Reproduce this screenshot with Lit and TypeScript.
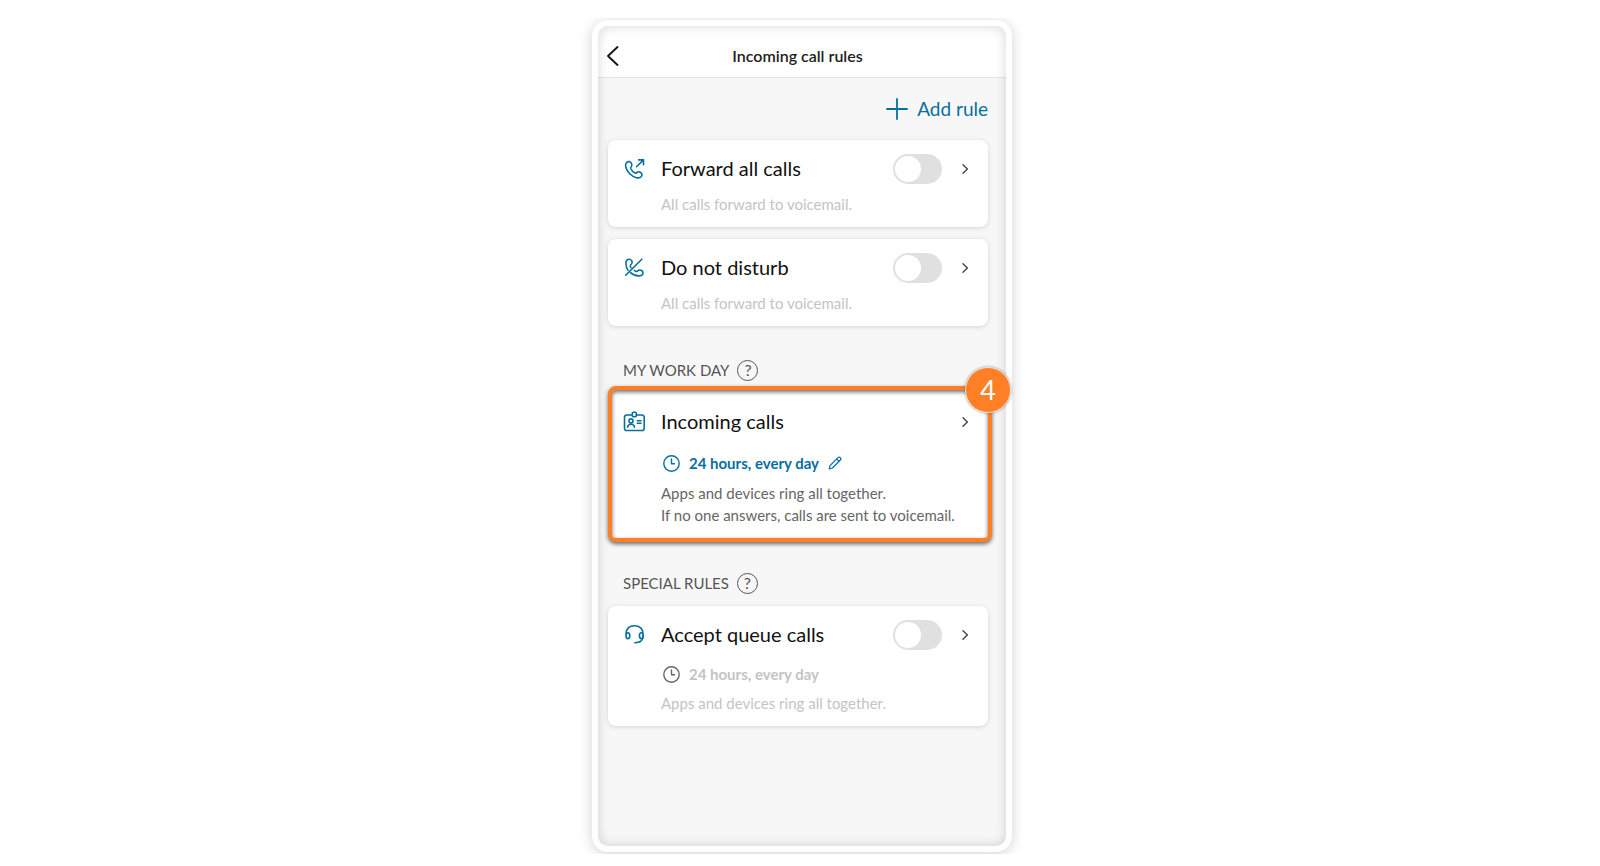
import { LitElement, html, css, svg, nothing } from "lit";
import { customElement, property } from "lit/decorators.js";

const handset = svg`<path d="M5.5 3.6C3 4 2.2 6.5 2.8 9C4 14 8.5 18.5 13.5 19.7C16 20.3 18.7 19.5 19 17C19.2 15 16.5 13.3 14.8 14C13.5 14.6 13.5 15.7 12 15C10 14 8.5 12.3 7.7 10.5C7.2 9.3 8.7 8.8 8.8 7.5C9 5.500 7.500 3.300 5.500 3.600Z"/>`;

const icons: Record<string, unknown> = {
  forward: svg`${handset}<path d="M13.5 8.7L20.5 1.9M15.7 1.9H20.5V6.7"/>`,
  dnd: svg`<path d="M5 13.2C3.6 11 2.9 8.5 2.9 6C2.9 3.5 4.5 2 6.5 2.2C8.7 2.5 9.7 4.7 8.8 6.5C8.2 7.7 7 8 7.3 9.3L7.9 10.6M7.6 15.6C9.5 17.4 12.5 18.8 15.5 18.9C18.2 19 20 18 20 16C20 13.8 17.6 12.5 15.8 13.2C14.5 13.7 14.2 14.9 12.8 14.4L11.2 13.4M2.7 18.2L18.8 2.2"/>`,
  badge: svg`<path d="M9.3 4H3.8A2.3 2.3 0 0 0 1.5 6.3V17.2A2.3 2.3 0 0 0 3.8 19.5H18.9A2.3 2.3 0 0 0 21.2 17.2V6.3A2.3 2.3 0 0 0 18.9 4H13.3"/><rect x="9.3" y="1.2" width="4" height="4.6" rx="1"/><circle cx="8" cy="9.9" r="2"/><path d="M4.6 16.2C4.9 13.6 6.2 13.2 8 13.2S11.2 13.6 11.5 16.2M14.3 9.8H18M14.3 12.3H18"/>`,
  headset: svg`<path d="M3.2 10C2.8 4.8 6.5 1.7 11.5 1.7S20.2 4.8 19.8 10M20.2 12.5C20 16.7 16.5 18.6 11.8 18.7"/><ellipse cx="4.9" cy="11.7" rx="1.9" ry="2.9"/><ellipse cx="18.3" cy="11.7" rx="1.9" ry="2.9"/>`,
};

interface Rule {
  icon: string;
  title: string;
  lines: string[];
  schedule?: string;
  toggle?: boolean;
  step?: string;
}

@customElement("rule-card")
export class RuleCard extends LitElement {
  @property({ attribute: false }) rule!: Rule;

  static styles = css`
    :host {
      display: block;
      font-family: Lato, "Liberation Sans", sans-serif;
    }
    .card {
      position: relative;
      padding: 14px 16px 12px 15px;
      background: #fff;
      border-radius: 8px;
      box-shadow: 0 1px 5px rgba(0, 0, 0, 0.14);
    }
    .card.marked {
      margin-right: -4px;
      padding: 17px 16px 12px 11px;
      border: 4px solid #ff7f27;
      box-shadow: 0 2px 4px rgba(0, 0, 0, 0.6), inset 0 2px 4px rgba(0, 0, 0, 0.6);
    }
    .top {
      display: flex;
      align-items: center;
      gap: 16px;
      height: 30px;
    }
    h3 {
      flex: 1;
      margin: 0;
      padding-bottom: 2px;
      font-size: 20px;
      line-height: 28px;
      font-weight: 400;
      color: #111;
    }
    svg {
      display: block;
      flex: none;
      fill: none;
      stroke: currentColor;
      stroke-linecap: round;
      stroke-linejoin: round;
    }
    .icon {
      width: 22px;
      height: 22px;
      color: #066f9f;
      stroke-width: 1.6;
    }
    .toggle {
      appearance: none;
      flex: none;
      width: 49px;
      height: 30px;
      margin: 0;
      padding: 2px;
      border-radius: 15px;
      background: #e0e0e0;
      cursor: pointer;
    }
    .toggle::before {
      content: "";
      display: block;
      width: 26px;
      height: 26px;
      border-radius: 50%;
      background: #fff;
    }
    .toggle:checked {
      background: #066f9f;
    }
    .toggle:checked::before {
      margin-left: auto;
    }
    button {
      display: flex;
      align-items: center;
      justify-content: center;
      padding: 0;
      border: 0;
      background: none;
      color: inherit;
      font: inherit;
      cursor: pointer;
    }
    .open {
      width: 14px;
      height: 30px;
      color: #444;
    }
    .body {
      margin: 9px 0 0 38px;
      font-size: 15px;
      line-height: 22px;
      color: #666;
    }
    .off .body {
      color: #c4c4c4;
    }
    .schedule {
      display: flex;
      align-items: center;
      gap: 9px;
      margin: 13px 0 7px;
      padding-left: 2px;
      font-weight: 700;
      color: #066f9f;
    }
    .marked .schedule {
      margin: 15px 0 8px;
    }
    .timed .body {
      margin-top: 0;
    }
    .off .schedule {
      color: #c4c4c4;
    }
    .off .clock {
      color: #666;
    }
    p {
      margin: 0;
    }
    .step {
      position: absolute;
      top: -23px;
      right: -23px;
      z-index: 3;
      display: flex;
      align-items: center;
      justify-content: center;
      box-sizing: border-box;
      width: 46px;
      height: 46px;
      border: 1px solid #f3e4da;
      border-radius: 50%;
      background: #ff7f27;
      box-shadow: 0 0 3px rgba(0, 0, 0, 0.4);
      font-size: 27px;
      line-height: 30px;
      color: #fff;
    }
  `;

  render() {
    const r = this.rule;
    const kind = `card ${r.step ? "marked" : ""} ${r.toggle ? "off" : ""} ${r.schedule ? "timed" : ""}`;
    return html`<article class=${kind}>
      <div class="top">
        <svg class="icon" viewBox="0 0 22 22" aria-hidden="true">${icons[r.icon]}</svg>
        <h3 id="title">${r.title}</h3>
        ${r.toggle
          ? html`<input class="toggle" type="checkbox" role="switch" aria-labelledby="title" />`
          : nothing}
        <button class="open" type="button" aria-labelledby="title">
          <svg width="10" height="12" viewBox="0 0 10 12" stroke-width="1.4"><path d="M3 1.8L7.4 6L3 10.2" /></svg>
        </button>
      </div>
      <div class="body">
        ${r.schedule
          ? html`<div class="schedule">
              <svg class="clock" width="17" height="17" viewBox="0 0 17 17" stroke-width="1.4" aria-hidden="true">
                <circle cx="8.5" cy="8.5" r="7.7" />
                <path d="M8.5 4V8.8H11.5" />
              </svg>
              <span>${r.schedule}</span>
              ${r.step
                ? html`<button type="button" aria-label="Edit">
                    <svg width="14" height="14" viewBox="0 0 14 14" stroke-width="1.2">
                      <path d="M1.2 12.8L2 9.6L10 1.6C11.5 .3 13.7 2.5 12.4 4L4.4 12Z M8.7 3L11 5.3" />
                    </svg>
                  </button>`
                : nothing}
            </div>`
          : nothing}
        ${r.lines.map((line) => html`<p>${line}</p>`)}
      </div>
      ${r.step ? html`<span class="step">${r.step}</span>` : nothing}
    </article>`;
  }
}

const general: Rule[] = [
  { icon: "forward", title: "Forward all calls", lines: ["All calls forward to voicemail."], toggle: true },
  { icon: "dnd", title: "Do not disturb", lines: ["All calls forward to voicemail."], toggle: true },
];

const workDay: Rule = {
  icon: "badge",
  title: "Incoming calls",
  schedule: "24 hours, every day",
  lines: ["Apps and devices ring all together.", "If no one answers, calls are sent to voicemail."],
  step: "4",
};

const special: Rule = {
  icon: "headset",
  title: "Accept queue calls",
  schedule: "24 hours, every day",
  lines: ["Apps and devices ring all together."],
  toggle: true,
};

@customElement("app-root")
export class AppRoot extends LitElement {
  static styles = css`
    :host {
      display: block;
      min-height: 100vh;
      box-sizing: border-box;
      padding: 18px 0 12px 4px;
      background: #fff;
      font-family: Lato, "Liberation Sans", sans-serif;
    }
    .stage {
      box-sizing: border-box;
      max-width: 452px;
      margin: 0 auto;
      padding: 2px 16px;
      overflow: hidden;
    }
    .phone {
      position: relative;
      display: flex;
      flex-direction: column;
      min-height: calc(100vh - 46px);
      border: 6px solid #fff;
      border-radius: 16px;
      background: #f7f7f7;
      background-clip: padding-box;
      box-shadow: 0 2px 14px rgba(0, 0, 0, 0.18);
    }
    .phone::after {
      content: "";
      position: absolute;
      inset: 0;
      z-index: 1;
      border-radius: 10px;
      box-shadow: inset 0 0 12px rgba(0, 0, 0, 0.16);
      pointer-events: none;
    }
    header {
      display: grid;
      grid-template-columns: 24px 1fr 24px;
      align-items: center;
      height: 51px;
      padding: 0 18px 0 9px;
      border-bottom: 1px solid #e4e4e4;
      border-radius: 10px 10px 0 0;
      background: #fff;
    }
    h1 {
      margin: 0;
      padding-top: 8px;
      font-size: 16px;
      line-height: 24px;
      font-weight: 600;
      text-align: center;
      color: #222;
    }
    button {
      padding: 0;
      border: 0;
      background: none;
      font: inherit;
      cursor: pointer;
    }
    .back {
      padding-top: 8px;
      color: #111;
      text-align: left;
    }
    svg {
      display: block;
      fill: none;
      stroke: currentColor;
      stroke-linecap: round;
      stroke-linejoin: round;
    }
    main {
      display: flex;
      flex-direction: column;
      padding: 16px 18px 24px 10px;
    }
    .add {
      display: flex;
      align-items: center;
      align-self: flex-end;
      gap: 9px;
      margin-bottom: 17px;
      font-size: 19px;
      line-height: 29px;
      color: #066f9f;
    }
    .list {
      display: grid;
      gap: 12px;
    }
    .section {
      display: flex;
      align-items: center;
      gap: 8px;
      margin: 33px 0 5px;
      padding-left: 15px;
      line-height: 22px;
      color: #555;
    }
    .section.spaced {
      margin: 30px 0 12px;
    }
    h2 {
      margin: 0;
      font-size: 15px;
      font-weight: 400;
    }
    .help {
      box-sizing: border-box;
      width: 21px;
      height: 21px;
      border: 1px solid #555;
      border-radius: 50%;
      font-size: 16px;
      line-height: 18px;
      color: #555;
    }
  `;

  render() {
    return html`<div class="stage">
      <div class="phone">
        <header>
          <button class="back" type="button" aria-label="Back">
            <svg width="12" height="20" viewBox="0 0 12 20" stroke-width="1.8"><path d="M10.5 1L1 10L10.5 19" /></svg>
          </button>
          <h1>Incoming call rules</h1>
        </header>
        <main>
          <button class="add" type="button">
            <svg width="22" height="22" viewBox="0 0 22 22" stroke-width="1.8"><path d="M11 1V21M1 11H21" /></svg>
            Add rule
          </button>
          <div class="list">${general.map((rule) => html`<rule-card .rule=${rule}></rule-card>`)}</div>
          <div class="section">
            <h2>MY WORK DAY</h2>
            <button class="help" type="button" aria-label="Help: my work day">?</button>
          </div>
          <rule-card .rule=${workDay}></rule-card>
          <div class="section spaced">
            <h2>SPECIAL RULES</h2>
            <button class="help" type="button" aria-label="Help: special rules">?</button>
          </div>
          <rule-card .rule=${special}></rule-card>
        </main>
      </div>
    </div>`;
  }
}
